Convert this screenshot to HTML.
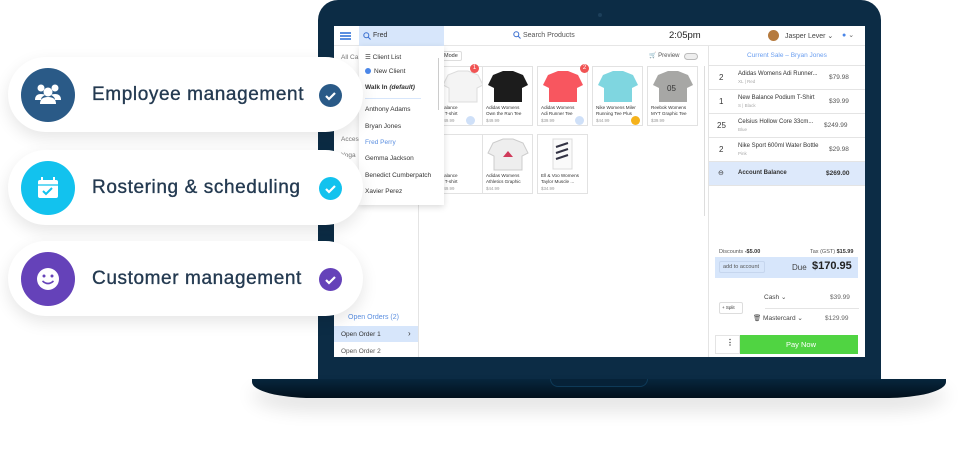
<!DOCTYPE html>
<html><head><meta charset="utf-8"><style>
*{margin:0;padding:0;box-sizing:border-box}
body{width:980px;height:468px;background:#fff;position:relative;overflow:hidden;font-family:"Liberation Sans",Arial,sans-serif}
.a{position:absolute}
.t{position:absolute;font-size:6.5px;color:#333;white-space:nowrap}
.lid{left:318px;top:0;width:563px;height:381px;background:#0c2c45;border-radius:20px 20px 0 0}
.scr{left:334px;top:26px;width:531px;height:331px;background:#fff;overflow:hidden}
.base{left:252px;top:379px;width:694px;height:19px;background:linear-gradient(#07263d,#02101c);border-radius:0 0 60px 60px/0 0 16px 16px;box-shadow:0 12px 18px rgba(0,0,0,.12)}
.notch{left:550px;top:379px;width:98px;height:8px;background:#062238;border-radius:0 0 8px 8px;border:1px solid #0e3a58;border-top:none}
.card{left:8px;width:355px;height:75px;background:#fff;border-radius:38px;box-shadow:0 6px 16px rgba(0,0,0,.10);z-index:5}
.ic{position:absolute;left:13px;top:11px;width:54px;height:54px;border-radius:50%}
.lbl{position:absolute;left:84px;top:27px;font-size:19px;color:#243a51;letter-spacing:.6px;-webkit-text-stroke:0.35px #243a51}
.ck{position:absolute;left:311px;top:27px;width:23px;height:23px;border-radius:50%}
.tile{position:absolute;width:51px;height:60px;border:1px solid #e2e2e2;background:#fff}
.tile .n{position:absolute;left:3px;top:38px;font-size:4.6px;line-height:5.5px;color:#333}
.tile .p{position:absolute;left:3px;top:51px;font-size:4.4px;color:#999}
.row{position:absolute;left:0;width:157px;height:24px;border-bottom:1px solid #e4e4e4}
</style></head><body>
<div class="a lid"></div>
<div class="a" style="left:598px;top:13px;width:4px;height:4px;border-radius:50%;background:#1c3f5a"></div>
<div class="a scr">
 <div class="a" style="left:0;top:0;width:531px;height:20px;border-bottom:1px solid #e6e6e6"></div>
 <div class="a" style="left:6px;top:6px;width:11px;height:2px;background:#5b8fe0;box-shadow:0 3px 0 #5b8fe0,0 6px 0 #5b8fe0"></div>
 <div class="a" style="left:25px;top:0;width:85px;height:20px;background:#d7e6fb"></div>
 <svg class="a" style="left:29px;top:6px" width="8" height="8"><circle cx="3.3" cy="3.3" r="2.5" fill="none" stroke="#3a6fd0" stroke-width="1"/><path d="M5 5l2.5 2.5" stroke="#3a6fd0"/></svg>
 <div class="t" style="left:39px;top:6px;font-size:7px">Fred</div>
 <svg class="a" style="left:179px;top:5px" width="8" height="8"><circle cx="3.3" cy="3.3" r="2.5" fill="none" stroke="#3a6fd0" stroke-width="1"/><path d="M5 5l2.5 2.5" stroke="#3a6fd0"/></svg>
 <div class="t" style="left:189px;top:6px;font-size:7px;color:#555">Search Products</div>
 <div class="t" style="left:335px;top:4px;font-size:9.5px;color:#222">2:05pm</div>
 <div class="a" style="left:434px;top:4px;width:11px;height:11px;border-radius:50%;background:#b57a3e"></div>
 <div class="t" style="left:451px;top:6px;font-size:7px;color:#444">Jasper Lever ⌄</div>
 <div class="t" style="left:508px;top:5px;font-size:7px;color:#4a86e8">● <span style="color:#666">⌄</span></div>
 <div class="a" style="left:84px;top:20px;width:1px;height:311px;background:#e4e4e4"></div>
 <div class="t" style="left:7px;top:28px;color:#777">All Ca</div>
 <div class="t" style="left:7px;top:110px;color:#777">Acces</div>
 <div class="t" style="left:7px;top:126px;color:#777">Yoga</div>
 <div class="t" style="left:14px;top:288px;color:#5b8fe0;font-size:7px">Open Orders (2)</div>
 <div class="a" style="left:0;top:300px;width:84px;height:16px;background:#d7e6fb"></div>
 <div class="t" style="left:7px;top:305px;color:#333">Open Order 1</div>
 <div class="t" style="left:74px;top:303px;color:#333;font-size:8px">›</div>
 <div class="t" style="left:7px;top:322px;color:#555">Open Order 2</div>
 <div class="a" style="left:25px;top:20px;width:85px;height:159px;background:#fff;box-shadow:0 2px 6px rgba(0,0,0,.15);z-index:2">
  <div class="t" style="left:6px;top:7px;color:#333">☰ Client List</div>
  <div class="a" style="left:6px;top:22px;width:6px;height:6px;border-radius:50%;background:#4a86e8"></div>
  <div class="t" style="left:15px;top:22px;color:#333">New Client</div>
  <div class="t" style="left:6px;top:38px;color:#333;font-weight:bold">Walk In <i>(default)</i></div>
  <div class="a" style="left:6px;top:52px;width:56px;height:1px;background:#d7e6fb"></div>
  <div class="t" style="left:6px;top:60px">Anthony Adams</div>
  <div class="t" style="left:6px;top:77px">Bryan Jones</div>
  <div class="t" style="left:6px;top:93px;color:#5b8fe0">Fred Perry</div>
  <div class="t" style="left:6px;top:109px">Gemma Jackson</div>
  <div class="t" style="left:6px;top:126px">Benedict Cumberpatch</div>
  <div class="t" style="left:6px;top:142px">Xavier Perez</div>
  <div class="a" style="left:79px;top:12px;width:1px;height:52px;background:#ccc"></div>
 </div>
 <div class="a" style="left:106px;top:25px;width:22px;height:10px;border:1px solid #ddd;border-radius:2px"></div>
 <div class="t" style="left:110px;top:27px;font-size:5.5px">Mode</div>
 <div class="t" style="left:315px;top:26px;color:#555;font-size:6px"><span style="color:#4a86e8">🛒</span> Preview</div>
 <div class="a" style="left:350px;top:27px;width:14px;height:7px;border-radius:4px;border:1px solid #bbb;background:#eee"></div>
 <div class="a" style="left:370px;top:40px;width:1px;height:150px;background:#ddd"></div>
 <div class="tile" style="left:103px;top:40px"><svg width="49" height="36"><path d="M10 8l10-4h10l10 4 5 10-6 3v14H11V21l-6-3z" fill="#f4f4f4" stroke="#ddd"/></svg><div class="n">Balance<br>n T-shirt</div><div class="p">$49.99</div></div>
 <div class="tile" style="left:148px;top:40px"><svg width="49" height="36"><path d="M10 8l10-4h10l10 4 5 10-6 3v14H11V21l-6-3z" fill="#1c1c1c"/></svg><div class="n">Adidas Womens<br>Own the Run Tee</div><div class="p">$49.99</div></div>
 <div class="tile" style="left:203px;top:40px"><svg width="49" height="36"><path d="M10 8l10-4h10l10 4 5 10-6 3v14H11V21l-6-3z" fill="#f8565f"/></svg><div class="n">Adidas Womens<br>Adi Runner Tee</div><div class="p">$39.99</div></div>
 <div class="tile" style="left:258px;top:40px"><svg width="49" height="36"><path d="M10 8l10-4h10l10 4 5 10-6 3v14H11V21l-6-3z" fill="#7fd6e0"/></svg><div class="n">Nike Womens Miler<br>Running Tee Plus</div><div class="p">$44.99</div></div>
 <div class="tile" style="left:313px;top:40px"><svg width="49" height="36"><path d="M10 8l10-4h10l10 4 5 10-6 3v14H11V21l-6-3z" fill="#a7a7a5"/><text x="19" y="24" font-size="8" fill="#333" font-family="Liberation Sans">05</text></svg><div class="n">Reebok Womens<br>MYT Graphic Tee</div><div class="p">$39.99</div></div>
 <div class="a" style="left:136px;top:38px;width:9px;height:9px;border-radius:50%;background:#f05454;color:#fff;font-size:6px;text-align:center;line-height:9px">1</div>
 <div class="a" style="left:246px;top:38px;width:9px;height:9px;border-radius:50%;background:#f05454;color:#fff;font-size:6px;text-align:center;line-height:9px">2</div>
 <div class="a" style="left:132px;top:90px;width:9px;height:9px;border-radius:50%;background:#cfe0f8"></div>
 <div class="a" style="left:241px;top:90px;width:9px;height:9px;border-radius:50%;background:#cfe0f8"></div>
 <div class="a" style="left:297px;top:90px;width:9px;height:9px;border-radius:50%;background:#f5b21b"></div>
 <div class="tile" style="left:103px;top:108px"><div class="n">Balance<br>n T-shirt</div><div class="p">$49.99</div></div>
 <div class="tile" style="left:148px;top:108px"><svg width="49" height="36"><path d="M10 8l10-4h10l10 4 5 10-6 3v14H11V21l-6-3z" fill="#eee" stroke="#ccc"/><path d="M20 22l5-6 5 6z" fill="#d03a5a"/></svg><div class="n">Adidas Womens<br>Athletics Graphic</div><div class="p">$44.99</div></div>
 <div class="tile" style="left:203px;top:108px"><svg width="49" height="36"><path d="M15 4h19v30H15z" fill="#fafafa" stroke="#ddd"/><path d="M18 12l12-4M18 18l12-4M18 24l12-4" stroke="#334" stroke-width="2"/></svg><div class="n">Ell &amp; Voo Womens<br>Taylor Muscle ...</div><div class="p">$34.99</div></div>
 <div class="a" style="left:374px;top:20px;width:1px;height:311px;background:#e4e4e4"></div>
 <div class="a" style="left:375px;top:20px;width:156px;height:311px">
  <div class="t" style="left:38px;top:6px;color:#6a9ef0">Current Sale – Bryan Jones</div>
  <div class="a" style="left:0;top:19px;width:156px;height:1px;background:#e4e4e4"></div>
  <div class="row" style="top:20px"><div class="t" style="left:10px;top:7px;font-size:8px">2</div><div class="t" style="left:29px;top:5px;font-size:6px">Adidas Womens Adi Runner...</div><div class="t" style="left:29px;top:13px;font-size:4.5px;color:#aaa">XL | Red</div><div class="t" style="left:120px;top:8px;font-size:6.5px;color:#555">$79.98</div></div>
  <div class="row" style="top:44px"><div class="t" style="left:10px;top:7px;font-size:8px">1</div><div class="t" style="left:29px;top:5px;font-size:6px">New Balance Podium T-Shirt</div><div class="t" style="left:29px;top:13px;font-size:4.5px;color:#aaa">S | Black</div><div class="t" style="left:120px;top:8px;font-size:6.5px;color:#555">$39.99</div></div>
  <div class="row" style="top:68px"><div class="t" style="left:8px;top:7px;font-size:8px">25</div><div class="t" style="left:29px;top:5px;font-size:6px">Celsius Hollow Core 33cm...</div><div class="t" style="left:29px;top:13px;font-size:4.5px;color:#aaa">Blue</div><div class="t" style="left:115px;top:8px;font-size:6.5px;color:#555">$249.99</div></div>
  <div class="row" style="top:92px"><div class="t" style="left:10px;top:7px;font-size:8px">2</div><div class="t" style="left:29px;top:5px;font-size:6px">Nike Sport 600ml Water Bottle</div><div class="t" style="left:29px;top:13px;font-size:4.5px;color:#aaa">Pink</div><div class="t" style="left:120px;top:8px;font-size:6.5px;color:#555">$29.98</div></div>
  <div class="row" style="top:116px;background:#dde9fb"><div class="t" style="left:9px;top:7px;font-size:7px">⊖</div><div class="t" style="left:29px;top:8px;font-size:6px;font-weight:bold">Account Balance</div><div class="t" style="left:117px;top:8px;font-size:6.5px;font-weight:bold">$269.00</div></div>
  <div class="t" style="left:10px;top:203px;font-size:5.5px;color:#555">Discounts <b style="color:#333">-$5.00</b></div>
  <div class="t" style="left:101px;top:203px;font-size:5.5px;color:#555">Tax (GST) <b style="color:#333">$15.99</b></div>
  <div class="a" style="left:6px;top:211px;width:143px;height:21px;background:#d7e6fb"></div>
  <div class="a" style="left:10px;top:215px;width:46px;height:12px;border:1px solid #c6d6ee;border-radius:2px"></div>
  <div class="t" style="left:14px;top:218px;font-size:5.5px;color:#555">add to account</div>
  <div class="t" style="left:83px;top:217px;font-size:8px;color:#444">Due</div>
  <div class="t" style="left:103px;top:214px;font-size:11px;font-weight:bold;color:#222">$170.95</div>
  <div class="t" style="left:55px;top:247px;font-size:6.5px;color:#444">Cash ⌄</div>
  <div class="t" style="left:121px;top:248px;font-size:6.5px;color:#666">$39.99</div>
  <div class="a" style="left:56px;top:262px;width:94px;height:1px;background:#e4e4e4"></div>
  <div class="a" style="left:10px;top:256px;width:24px;height:12px;border:1px solid #ddd;border-radius:2px"></div>
  <div class="t" style="left:13px;top:259px;font-size:4.5px">+ Split</div>
  <div class="t" style="left:44px;top:268px;font-size:6.5px;color:#444">🗑 Mastercard ⌄</div>
  <div class="t" style="left:116px;top:269px;font-size:6.5px;color:#666">$129.99</div>
  <div class="a" style="left:6px;top:289px;width:25px;height:19px;border:1px solid #e4e4e4"></div>
  <div class="t" style="left:17px;top:292px;font-size:8px;font-weight:bold">⋮</div>
  <div class="a" style="left:31px;top:289px;width:118px;height:19px;background:#50d442"></div>
  <div class="t" style="left:77px;top:294px;font-size:7.5px;color:#fff">Pay Now</div>
 </div>
</div>
<div class="a base"></div>
<div class="a notch"></div>

<div class="a card" style="top:57px">
 <div class="ic" style="background:#2a5a87"><svg width="54" height="54"><g fill="#fff"><circle cx="20" cy="20" r="3.5"/><circle cx="34" cy="20" r="3.5"/><circle cx="27" cy="24" r="4.5"/><path d="M14 32q0-6 6-6 3 0 4 1-4 2-4 5zM40 32q0-6-6-6-3 0-4 1 4 2 4 5zM19 36q0-7 8-7t8 7z"/></g></svg></div>
 <div class="lbl">Employee management</div>
 <div class="ck" style="background:#2a5a87"><svg width="23" height="23"><path d="M7 12l3 3 6-6" stroke="#fff" stroke-width="2.2" fill="none"/></svg></div>
</div>
<div class="a card" style="top:150px">
 <div class="ic" style="background:#12c2ee"><svg width="54" height="54"><rect x="17" y="19" width="20" height="18" rx="2" fill="#fff"/><path d="M21 16v5M33 16v5" stroke="#fff" stroke-width="2"/><path d="M17 24h20" stroke="#12c2ee" stroke-width="1.2"/><path d="M22 30l3 3 6-6" stroke="#12c2ee" stroke-width="2" fill="none"/></svg></div>
 <div class="lbl">Rostering &amp; scheduling</div>
 <div class="ck" style="background:#12c2ee"><svg width="23" height="23"><path d="M7 12l3 3 6-6" stroke="#fff" stroke-width="2.2" fill="none"/></svg></div>
</div>
<div class="a card" style="top:241px">
 <div class="ic" style="background:#6542b9"><svg width="54" height="54"><circle cx="27" cy="27" r="11" fill="#fff"/><circle cx="23" cy="24" r="1.5" fill="#6542b9"/><circle cx="31" cy="24" r="1.5" fill="#6542b9"/><path d="M21.5 29q5.5 5 11 0" stroke="#6542b9" stroke-width="1.6" fill="none"/></svg></div>
 <div class="lbl">Customer management</div>
 <div class="ck" style="background:#6542b9"><svg width="23" height="23"><path d="M7 12l3 3 6-6" stroke="#fff" stroke-width="2.2" fill="none"/></svg></div>
</div>
</body></html>
